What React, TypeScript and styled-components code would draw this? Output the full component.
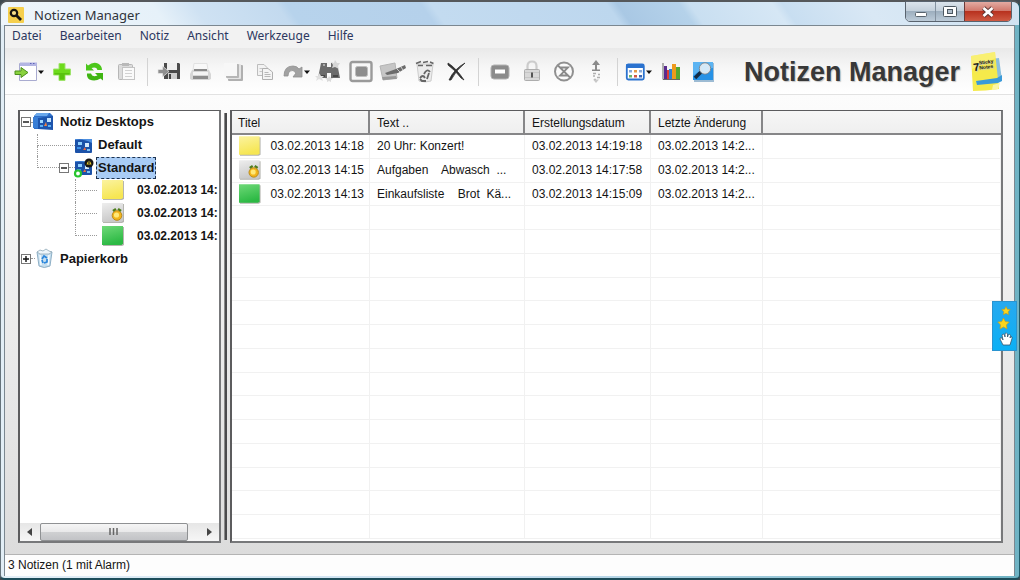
import React from "react";
import styled, { createGlobalStyle } from "styled-components";

const GlobalStyle = createGlobalStyle`
  * { box-sizing: border-box; }
  html, body { margin: 0; background: #3f4a50; }
  body { font-family: "Liberation Sans", Arial, sans-serif; font-size: 12px; color: #141414; }
  button { font: inherit; color: inherit; padding: 0; border: 0; background: none; }
  ul { list-style: none; margin: 0; padding: 0; }
`;

/* ---------- window frame ---------- */

const Window = styled.div`
  position: relative;
  display: flex;
  flex-direction: column;
  min-height: 100vh;
  padding: 0 4px 2px 3px;
  border-style: solid;
  border-width: 2px 1px 2px 1px;
  border-color: #55585b #1f5a68 #1d4d5a #66737b;
  border-radius: 8px 8px 5px 5px;
  background: linear-gradient(90deg, #e2eef6 0, #c9dff0 50%, #6fb3c4 100%);
`;

const TitleBar = styled.header`
  display: flex;
  align-items: center;
  height: 23px;
  margin: 0 -4px 0 -3px;
  padding: 3px 7px 0 7px;
  border-radius: 6px 6px 0 0;
  background: linear-gradient(
    55deg,
    #eff6fb 0, #e6f1f9 16%, #cfe2f3 20%, #c3daef 28%, #b7d3ec 29%, #b5d1eb 42%,
    #c3dbf0 43%, #bdd7ee 60%, #a9c8e4 61%, #b5d2ea 67%, #c9dff1 68%, #d6e7f5 76%,
    #c8def1 77%, #d9e8f5 85%, #cfe2f1 100%
  );
`;

const WindowTitle = styled.h1`
  flex: 1;
  margin: 0 0 0 10px;
  font: 400 13px/20px "Noto Sans", "Open Sans", sans-serif;
  color: #30343c;
`;

const Caption = styled.div`
  display: flex;
  align-self: flex-start;
  height: 21px;
  margin-top: -4px;
  border: 1px solid #59636e;
  border-radius: 0 0 5px 5px;
  overflow: hidden;
`;

const CaptionButton = styled.button<{ $close?: boolean }>`
  display: flex;
  align-items: center;
  justify-content: center;
  width: ${(p) => (p.$close ? 47 : 29)}px;
  border-left: ${(p) => (p.$close ? "1px solid #6b3a38" : "0")};
  background: ${(p) =>
    p.$close
      ? "linear-gradient(#e3aba2 0, #d0766a 48%, #b8321f 50%, #cf5a43 100%)"
      : "linear-gradient(#dbe4ec 0, #c3cfda 48%, #9dafbf 50%, #bccbd8 100%)"};
  & + &:not(:last-child) { border-left: 1px solid #8492a0; }
`;

const Client = styled.div`
  flex: 1;
  display: flex;
  flex-direction: column;
  border: 1px solid #7b8790;
  border-width: 1px 1px 0;
  background: #f1f1f1;
`;

/* ---------- menu and toolbar ---------- */

const MenuBar = styled.nav`
  display: flex;
  gap: 18px;
  height: 22px;
  padding: 0 7px;
  background: #f2f2f2;
`;

const MenuItem = styled.button`
  height: 20px;
  font: 400 12px/20px "Noto Sans", "Open Sans", sans-serif;
  color: #2c3760;
`;

const Toolbar = styled.div`
  display: flex;
  align-items: center;
  gap: 6px;
  height: 47px;
  padding: 1px 12px 0;
  border-bottom: 1px solid #e2e2e2;
  background: linear-gradient(#e9e9e9 0, #f7f7f7 45%, #ffffff 100%);
`;

const ToolButton = styled.button`
  display: flex;
  align-items: center;
  justify-content: center;
  flex: none;
  width: 26px;
  height: 26px;
  svg { flex: none; overflow: visible; }
`;

const Separator = styled.span`
  width: 1px;
  height: 28px;
  margin: 0 2px;
  background: #d3d3d3;
`;

const Brand = styled.div`
  display: flex;
  align-items: center;
  gap: 11px;
  margin-left: auto;
  font-size: 27px;
  line-height: 32px;
  font-weight: 700;
  color: #383838;
  white-space: nowrap;
  text-shadow: 1px 1px 1px #c4c4c4;
`;

/* ---------- body ---------- */

const Body = styled.main`
  flex: 1;
  display: flex;
  padding: 15px 11px 11px 13px;
  background: linear-gradient(#fcfcfc 0, #ececec 50%, #dcdcdc 100%);
`;

const Panel = styled.section`
  display: flex;
  flex-direction: column;
  border: 2px solid #77787a;
  border-top-color: #5c5c5e;
  border-left-color: #5c5c5e;
  background: #fff;
  overflow: hidden;
`;

const TreePanel = styled(Panel)`
  flex: none;
  width: 203px;
  border-top-width: 1px;
`;

const Splitter = styled.div`
  width: 3px;
  margin: 3px;
  border-left: 1px solid #8a8a8a;
  border-right: 2px solid #4a4a4c;
`;

const ListPanel = styled(Panel)`
  flex: 1;
  min-width: 0;
  border-top-width: 1px;
`;

const Tree = styled.ul`
  display: grid;
  grid-auto-rows: 1fr;
  height: 159px;
`;

const TreeRow = styled.li<{ $indent: number }>`
  display: flex;
  align-items: center;
  padding-left: ${(p) => p.$indent}px;
  white-space: nowrap;
`;

const Guide = styled.span<{ $width: number; $last?: boolean }>`
  display: flex;
  flex-direction: column;
  align-self: stretch;
  flex: none;
  width: ${(p) => p.$width}px;
  &::before {
    content: "";
    flex: 1;
    border-left: 1px dotted #9a9a9a;
    border-bottom: 1px dotted #9a9a9a;
  }
  &::after {
    content: "";
    flex: 1;
    border-left: 1px dotted ${(p) => (p.$last ? "transparent" : "#9a9a9a")};
  }
`;

const Dash = styled.span<{ $width: number }>`
  flex: none;
  width: ${(p) => p.$width}px;
  border-top: 1px dotted #9a9a9a;
`;

const Toggle = styled.button`
  flex: none;
  display: flex;
  width: 10px;
  height: 10px;
  svg { display: block; }
`;

const TreeIcon = styled.span<{ $width: number }>`
  flex: none;
  display: flex;
  justify-content: center;
  width: ${(p) => p.$width}px;
  svg { overflow: visible; }
`;

const TreeLabel = styled.span<{ $selected?: boolean }>`
  margin-left: 4px;
  padding: 0 1px;
  font-size: 13px;
  line-height: 20px;
  font-weight: 700;
  border: 1px dashed ${(p) => (p.$selected ? "#1d3350" : "transparent")};
  background: ${(p) => (p.$selected ? "#a9ccf5" : "none")};
`;

const NoteLabel = styled.span`
  margin-left: 8px;
  font-weight: 700;
  line-height: 20px;
`;

const ScrollBar = styled.div`
  display: flex;
  height: 18px;
  margin-top: auto;
  background: linear-gradient(#e6e6e6, #f6f6f6);
`;

const ScrollArrow = styled.button`
  display: flex;
  align-items: center;
  justify-content: center;
  flex: none;
  width: 20px;
`;

const ScrollTrack = styled.div`
  flex: 1;
  display: flex;
`;

const ScrollThumb = styled.div`
  display: flex;
  align-items: center;
  justify-content: center;
  width: 93%;
  border: 1px solid #8f9193;
  border-radius: 2px;
  background: linear-gradient(#f5f5f5 0, #e9e9ea 48%, #cfd0d2 52%, #c2c3c6 100%);
`;

/* ---------- list ---------- */

const NoteTable = styled.table`
  flex: 1;
  width: 100%;
  table-layout: fixed;
  border-collapse: separate;
  border-spacing: 0;
  margin-bottom: 2px;
`;

const TableFrame = styled.div`
  flex: 1;
  display: flex;
`;

const Col = styled.col<{ $width?: number }>`
  width: ${(p) => (p.$width ? `${p.$width}px` : "auto")};
`;

const Th = styled.th`
  height: 24px;
  padding: 1px 7px 0;
  text-align: left;
  font-weight: 400;
  line-height: 18px;
  white-space: nowrap;
  background: linear-gradient(#f6f6f6, #efefef);
  border-bottom: 2px solid #868688;
  border-right: 2px solid #868688;
  &:first-child { padding-left: 6px; }
  &:last-child { border-right: 0; }
`;

const Td = styled.td`
  height: 23px;
  padding: 0 5px 0 7px;
  line-height: 20px;
  white-space: pre;
  overflow: hidden;
  text-overflow: ellipsis;
  border-bottom: 1px solid #f1f1f1;
  border-right: 1px solid #f1f1f1;
`;

const TitleCell = styled.div`
  display: flex;
  align-items: center;
  gap: 10px;
`;

/* ---------- status and side tab ---------- */

const StatusBar = styled.footer`
  height: 22px;
  padding: 0 3px;
  line-height: 21px;
  border-top: 1px solid #b4b4b4;
  background: #fdfdfd;
`;

const SideTab = styled.button`
  position: absolute;
  right: 2px;
  bottom: 227px;
  width: 25px;
  height: 50px;
  border: 1px solid #2a94d0;
  background: linear-gradient(#27a9ef, #0bb0f5);
  svg { display: block; }
`;

/* ---------- drawings ---------- */

type NoteKind = "yellow" | "alarm" | "green";
const noteColors: Record<NoteKind, [string, string]> = {
  yellow: ["#fbf3a0", "#f6e652"],
  alarm: ["#eeeeee", "#c9c9c9"],
  green: ["#6fd978", "#2cb944"],
};

const NoteIcon = ({ kind, id }: { kind: NoteKind; id: string }) => (
  <svg width="22" height="20" viewBox="0 0 22 20" aria-hidden="true">
    <defs>
      <linearGradient id={id} x1="0" y1="0" x2="0.3" y2="1">
        <stop offset="0" stopColor={noteColors[kind][0]} />
        <stop offset="1" stopColor={noteColors[kind][1]} />
      </linearGradient>
    </defs>
    <path d="M1 1H22V19L20 20H1Z" fill="#9c9c94" opacity=".75" />
    <path d="M0 0H21V17.5L19.500 19H0Z" fill={`url(#${id})`} />
    {kind === "alarm" && (
      <g>
        <path d="M11 8l3-2M19 8l-3-2" stroke="#4f7d1d" strokeWidth="2.500" />
        <circle cx="15" cy="12.500" r="4.800" fill="#f3b51b" stroke="#b98a1c" />
        <circle cx="14.500" cy="12" r="2.600" fill="#ffe878" />
      </g>
    )}
  </svg>
);

const DesktopIcon = ({ badge }: { badge?: boolean }) => (
  <svg width="17" height="15" viewBox="0 0 17 15" aria-hidden="true">
    <rect x="0" y="1" width="17" height="14" rx="1" fill="#1c52a8" />
    <path d="M0 2Q8 0 17 5V1H0Z" fill="#4d8fe0" />
    <rect x="3" y="4" width="4" height="3" fill="#8fd0ff" />
    <rect x="2" y="9" width="4" height="2" fill="#3f93e8" />
    <rect x="10" y="5" width="4" height="4" fill="#d6ecff" />
    <path d="M8 12l2-3 1 3z" fill="#f26d3c" />
    <rect x="12" y="11" width="3" height="2" fill="#7ec2f5" />
    {badge && (
      <g>
        <circle cx="14" cy="3" r="4.500" fill="#151515" />
        <path d="M11.500 4.500Q14-3 16.500 4.500Z" fill="#e4c62b" />
        <path d="M14 1v3" stroke="#222" strokeWidth="1.200" />
        <circle cx="3" cy="13.500" r="3" fill="#fff" stroke="#27c52f" strokeWidth="2.200" />
      </g>
    )}
  </svg>
);

const DesktopsIcon = () => (
  <svg width="21" height="18" viewBox="0 0 21 18" aria-hidden="true">
    <path d="M1 3L4 0H17L20 3V15L17 16H1Z" fill="#2f6fc8" />
    <path d="M1 3L4 0H16L14 3Z" fill="#6aa8ec" />
    <rect x="0" y="4" width="9" height="11" fill="#3a7fd6" />
    <path d="M5 5L20 3V17L5 16Z" fill="#1d55ad" />
    <rect x="7" y="7" width="3" height="3" fill="#9ed6ff" />
    <rect x="14" y="5" width="4" height="4" fill="#c4e3ff" />
    <path d="M11 13l2-4 1 4z" fill="#f08040" />
    <rect x="7" y="12" width="3" height="2" fill="#5db0f4" />
    <rect x="15" y="12" width="3" height="2" fill="#5db0f4" />
  </svg>
);

const BinIcon = () => (
  <svg width="17" height="19" viewBox="0 0 17 19" aria-hidden="true">
    <path d="M1 3H16L14 17Q8 20 3 17Z" fill="#c6deee" stroke="#8fb0c6" />
    <path d="M1 3L4 1L7 2L10 0L13 2L16 3L13 5H4Z" fill="#eef6fb" stroke="#90a9b8" strokeWidth=".8" />
    <path d="M4 6l1 10M13 6l-1 10" stroke="#f4fafd" strokeWidth="1.500" />
    <path d="M6 10l2-3 3 2M11 10v3l-3 1M6 11l1 3" stroke="#2b86dc" strokeWidth="1.700" fill="none" />
  </svg>
);

const ToggleIcon = ({ open }: { open?: boolean }) => (
  <svg width="10" height="10" viewBox="0 0 10 10" aria-hidden="true">
    <rect x=".5" y=".5" width="9" height="9" fill="#fff" stroke="#777" />
    <path d={open ? "M2 5H8" : "M2 5H8M5 2V8"} stroke="#111" strokeWidth="1.400" />
  </svg>
);

const Caret = ({ x }: { x: number }) => <path d={`M${x} 10.500h6l-3 3.500z`} fill="#111" />;

const toolIcons = {
  open: (
    <svg width="30" height="24" viewBox="0 0 30 24">
      <path d="M4.500 3.500H21.500V20.500H4.500Z" fill="#fff" stroke="#a9abd0" />
      <path d="M5 2.500H22V6H5Z" fill="#b3b5e3" />
      <path d="M15 3.500h1.500M18 3.500h1.500" stroke="#5d62b8" />
      <path d="M0 11H6V7.500L13 12.500L6 17.500V14.500H0Z" fill="#8ad23e" stroke="#4b8f1c" />
      <Caret x={23} />
    </svg>
  ),
  add: (
    <svg width="24" height="24" viewBox="0 0 24 24">
      <path d="M9 3.500H15V9H20.500V15H15V20.500H9V15H3.500V9H9Z" fill="#6ddb1c" stroke="#9ee36b" />
      <path d="M9.500 14.500H4.500V13H19.500V14.500H14.500V19.500H9.500Z" fill="#58c20e" />
    </svg>
  ),
  refresh: (
    <svg width="24" height="24" viewBox="0 0 24 24">
      <path d="M4 3.500L6 5.500Q11 1.500 16 3.500Q20 5.500 20 10H15.500Q14.500 6.500 9.500 8L12 10.500H4Z" fill="#4cc71b" />
      <path d="M21 20.500L18.500 18.500Q13 22 7.500 19.500Q4.500 17.500 5 13.500H9Q10 17.500 15.500 15.500L13 13H21Z" fill="#3fb512" />
    </svg>
  ),
  paste: (
    <svg width="24" height="24" viewBox="0 0 24 24">
      <rect x="4.500" y="4.500" width="14" height="15" rx="1" fill="#dcdcdc" stroke="#b6b6b6" />
      <rect x="8" y="3" width="7" height="3" fill="#b9b9b9" />
      <rect x="8.500" y="7.500" width="12" height="12" fill="#fafafa" stroke="#c4c4c4" />
      <path d="M11 10.500h7M11 13.500h7M11 16.500h7" stroke="#d2d2d2" />
    </svg>
  ),
  save: (
    <svg width="24" height="24" viewBox="0 0 24 24">
      <path d="M7 3H22L23 4V19H7Z" fill="#4b4b4b" />
      <rect x="10" y="3" width="10" height="7" fill="#efefef" />
      <rect x="11" y="13" width="9" height="6" fill="#cfcfcf" />
      <rect x="12" y="14" width="2" height="5" fill="#444" />
      <path d="M1 9.500H5.500V6L12 11.500L5.500 17V13.500H1Z" fill="#8f8f8f" stroke="#e8e8e8" strokeWidth=".7" />
    </svg>
  ),
  print: (
    <svg width="24" height="24" viewBox="0 0 24 24">
      <path d="M5 3.500H18L19 10H4Z" fill="#f8f8f8" stroke="#e2e2e2" />
      <path d="M3 10H20L22 14V19L20 20H3L1 19V14Z" fill="#d6d6d6" />
      <rect x="5" y="9" width="13" height="2" fill="#8a8a8a" />
      <rect x="4" y="12" width="15" height="3" fill="#f4f4f4" />
      <rect x="4" y="16" width="15" height="3" fill="#8d8d8d" />
    </svg>
  ),
  stack: (
    <svg width="24" height="24" viewBox="0 0 24 24">
      <rect x="7" y="5" width="15" height="16" rx="1" fill="#b0b0b0" />
      <rect x="6" y="4" width="14" height="15" rx="1" fill="#e4e4e4" />
      <rect x="5" y="4" width="13" height="14" rx="1" fill="#b6b6b6" />
      <rect x="3" y="3" width="13" height="13" fill="#f7f7f7" />
    </svg>
  ),
  copy: (
    <svg width="24" height="24" viewBox="0 0 24 24">
      <path d="M4.500 4.500H11L14.500 8V15.500H4.500Z" fill="#f2f2f2" stroke="#bdbdbd" />
      <path d="M6.500 8.500h4M6.500 11.500h3" stroke="#c8c8c8" />
      <path d="M9.500 8.500H15L19.500 12V19.500H9.500Z" fill="#f4f4f4" stroke="#b0b0b0" />
      <path d="M11.500 12.500h4M11.500 14.500h6M11.500 16.500h6" stroke="#b8b8b8" />
    </svg>
  ),
  redo: (
    <svg width="28" height="24" viewBox="0 0 28 24">
      <path d="M1 16Q1 6 10 6Q14 6 16 9L19 7V17H10L13 13Q10 9 7 11Q5 12.500 5 16Z" fill="#a2a2a2" stroke="#909090" strokeWidth=".8" />
      <Caret x={21} />
    </svg>
  ),
  find: (
    <svg width="26" height="24" viewBox="0 0 26 24">
      <path d="M5 3H11V7H15V3H21L24 18H15V13H11V18H2Z" fill="#6b6b6b" />
      <path d="M7 5H9M17 5H19" stroke="#aaa" strokeWidth="2" />
      <path d="M4 16H9M17 16H22" stroke="#474747" strokeWidth="2" />
      <path d="M19 0L21 3L24 3L22 6L23 9L19 7L16 8L17 5L15 2L18 3Z" fill="#d6d6d6" />
      <path d="M3 13L5 16L8 16L6 18L7 21L3 19L0 21L1 18L-1 16L2 16Z" fill="#e0e0e0" />
      <path d="M13 16L15 18L17 18L15 20L15 22L13 21L11 22V20L9 18H12Z" fill="#dadada" />
    </svg>
  ),
  frame: (
    <svg width="24" height="24" viewBox="0 0 24 24">
      <rect x="1.500" y="2" width="21" height="19" rx="2" fill="#f7f7f7" stroke="#9a9a9a" strokeWidth="2.400" />
      <rect x="6.500" y="6.500" width="12" height="10" rx="2" fill="#8d8d8d" stroke="#bdbdbd" />
    </svg>
  ),
  edit: (
    <svg width="28" height="24" viewBox="0 0 28 24">
      <path d="M1 6L16 3L18 18L4 20Z" fill="#c6c6c6" stroke="#b4b4b4" />
      <path d="M3 17L17 16L18 19L4 20Z" fill="#999" />
      <path d="M6 13L17 9L26 5L27 8L19 13L8 15Z" fill="#6c6c6c" />
      <path d="M18 9L21 12M22 7L24 10" stroke="#d0d0d0" />
    </svg>
  ),
  bin: (
    <svg width="24" height="24" viewBox="0 0 24 24">
      <path d="M4 4H20L18 21Q12 23 6 21Z" fill="#ececec" stroke="#cccccc" />
      <path d="M3 3.500L8 1.500M10 2.500L15 1.500M17 2L20.500 3.500M5 5.500H10M13 5.500H19" stroke="#666" strokeWidth="1.500" />
      <path d="M11 14Q14 8 17 12M16 13L14 19M7 18Q10 14 12 18M7 19L9 21H13" stroke="#666" strokeWidth="1.800" fill="none" />
    </svg>
  ),
  remove: (
    <svg width="24" height="24" viewBox="0 0 24 24">
      <path d="M3 3Q11 8 19 20L16 18Q10 10 3 5Z" fill="#303030" stroke="#303030" strokeWidth=".8" />
      <path d="M20 3Q11 10 6 20L4 20Q9 9 20 3Z" fill="#303030" stroke="#303030" strokeWidth=".8" />
    </svg>
  ),
  pill: (
    <svg width="24" height="24" viewBox="0 0 24 24">
      <rect x="3" y="5" width="18" height="14" rx="3" fill="#8b8b8b" stroke="#b3b3b3" />
      <rect x="7" y="9.500" width="10" height="4" fill="#fff" />
    </svg>
  ),
  lock: (
    <svg width="24" height="24" viewBox="0 0 24 24">
      <path d="M7.500 10V6Q7.500 1.500 12 1.500T16.500 6V10" fill="none" stroke="#cccccc" strokeWidth="2.200" />
      <rect x="4.500" y="9.500" width="15" height="11" rx="1" fill="#d8d8d8" stroke="#adadad" />
      <path d="M5 12.500H19M5 17.500H19" stroke="#c6c6c6" />
      <path d="M12 12.500V17.500" stroke="#555" strokeWidth="2" />
    </svg>
  ),
  sleep: (
    <svg width="24" height="24" viewBox="0 0 24 24">
      <circle cx="12" cy="11.500" r="9" fill="#fafafa" stroke="#909090" strokeWidth="2" />
      <path d="M8 7.500H16L8 15.500H16M6 5.500L18 17.500" fill="none" stroke="#8a8a8a" strokeWidth="1.800" />
    </svg>
  ),
  order: (
    <svg width="24" height="24" viewBox="0 0 24 24">
      <path d="M12 0L16 5H13V9.500H16V11H8V9.500H11V5H8Z" fill="#8a8a8a" />
      <path d="M9 13.500H12M14 14.500H16M9 16H11M13 17.500H16M10 19.500H12" stroke="#b0b0b0" strokeWidth="1.600" />
      <path d="M9 19.500H15L12 23Z" fill="#c8c8c8" />
    </svg>
  ),
  view: (
    <svg width="26" height="24" viewBox="0 0 26 24">
      <rect x=".8" y="4.500" width="17" height="15" rx="1.500" fill="#fff" stroke="#2a72cf" strokeWidth="1.800" />
      <rect x="0" y="4" width="18" height="4" rx="1" fill="#2a72cf" />
      <g>
        <rect x="3" y="10" width="3" height="2.500" fill="#8aa9d8" />
        <rect x="8" y="10" width="3" height="2.500" fill="#e39a45" />
        <rect x="13" y="10" width="3" height="2.500" fill="#8aa9d8" />
        <rect x="3" y="15" width="3" height="2.500" fill="#6db569" />
        <rect x="8" y="15" width="3" height="2.500" fill="#d05646" />
        <rect x="13" y="15" width="3" height="2.500" fill="#3e67b4" />
      </g>
      <Caret x={20} />
    </svg>
  ),
  chart: (
    <svg width="24" height="24" viewBox="0 0 24 24">
      <path d="M4 3V19.500H21" fill="none" stroke="#666" />
      <rect x="5" y="6" width="3" height="13" fill="#5a2b8e" />
      <rect x="8" y="10" width="3" height="9" fill="#de3d30" />
      <rect x="10" y="9" width="3" height="10" fill="#2f80d2" />
      <rect x="13" y="4" width="4" height="15" fill="#ee9a1d" />
      <rect x="17" y="7" width="4" height="12" fill="#55a832" />
    </svg>
  ),
  search: (
    <svg width="24" height="24" viewBox="0 0 24 24">
      <rect x="3" y="3" width="20" height="19" fill="#9dbbd3" />
      <rect x="2" y="2" width="20" height="18" fill="#2792e6" />
      <path d="M2 2H22V8Q11 8 2 16Z" fill="#5cb4f2" />
      <path d="M10 12L4 18" stroke="#152c45" strokeWidth="3.500" />
      <circle cx="14" cy="8.500" r="5" fill="#d3e9f8" stroke="#dfe4e8" strokeWidth="1.500" />
      <circle cx="14" cy="8.500" r="5.700" fill="none" stroke="#6c7b88" strokeWidth=".8" />
    </svg>
  ),
};

type ToolId = keyof typeof toolIcons;
const tools: ([ToolId, string] | null)[] = [
  ["open", "Öffnen"], ["add", "Neue Notiz"], ["refresh", "Aktualisieren"], ["paste", "Einfügen"], null,
  ["save", "Speichern"], ["print", "Drucken"], ["stack", "Duplizieren"], ["copy", "Kopieren"],
  ["redo", "Verschieben"], ["find", "Suchen"], ["frame", "Anzeigen"], ["edit", "Bearbeiten"],
  ["bin", "In den Papierkorb"], ["remove", "Löschen"], null,
  ["pill", "Minimieren"], ["lock", "Sperren"], ["sleep", "Schlafen"], ["order", "Sortieren"], null,
  ["view", "Ansicht"], ["chart", "Statistik"], ["search", "Suche"],
];

const AppIcon = () => (
  <svg width="16" height="16" viewBox="0 0 16 16" aria-hidden="true">
    <rect width="16" height="16" rx="1" fill="#f5cf4e" />
    <circle cx="6" cy="6" r="3.200" fill="#f8e08a" stroke="#171512" strokeWidth="2.200" />
    <path d="M8.500 8.500L13 13" stroke="#171512" strokeWidth="2.800" />
  </svg>
);

const BrandIcon = () => (
  <svg width="31" height="40" viewBox="0 0 31 40" aria-hidden="true">
    <path d="M11 8L28 6L31 28L14 34Z" fill="#8dbfdc" />
    <path d="M0 4L24 0L28 37Q14 39 2 39Z" fill="#f5ea4b" />
    <path d="M0 4L24 0L25 6L1 17Z" fill="#fbf48c" opacity=".6" />
    <path d="M5 29L26 26L31 23L31 29L27 31L6 33Z" fill="#3a9ad9" />
    <path d="M22 33L29 31L27 37L21 38Z" fill="#fbf6a6" />
    <g transform="rotate(-7 12 13)" fontFamily="Liberation Sans, sans-serif" fontWeight="700" fill="#15150f">
      <text x="2" y="18" fontSize="11">7</text>
      <text x="8" y="12" fontSize="5">Sticky</text>
      <text x="8" y="17" fontSize="5">Notes</text>
    </g>
  </svg>
);

const star = (cx: number, cy: number, r: number) =>
  Array.from({ length: 10 }, (_, i) => {
    const radius = i % 2 ? r * 0.5 : r;
    const a = (Math.PI / 5) * i - Math.PI / 2;
    return `${(cx + radius * Math.cos(a)).toFixed(1)},${(cy + radius * Math.sin(a)).toFixed(1)}`;
  }).join(" ");

const menus = ["Datei", "Bearbeiten", "Notiz", "Ansicht", "Werkzeuge", "Hilfe"];

const notes: { kind: NoteKind; title: string; text: string; created: string; changed: string }[] = [
  { kind: "yellow", title: "03.02.2013 14:18", text: "20 Uhr: Konzert!", created: "03.02.2013 14:19:18", changed: "03.02.2013 14:2..." },
  { kind: "alarm", title: "03.02.2013 14:15", text: "Aufgaben    Abwasch  ...", created: "03.02.2013 14:17:58", changed: "03.02.2013 14:2..." },
  { kind: "green", title: "03.02.2013 14:13", text: "Einkaufsliste    Brot  Kä...", created: "03.02.2013 14:15:09", changed: "03.02.2013 14:2..." },
];

const emptyRows = Array.from({ length: 14 }, (_, i) => i);

export default function App() {
  return (
    <>
      <GlobalStyle />
      <Window>
        <TitleBar>
          <AppIcon />
          <WindowTitle>Notizen Manager</WindowTitle>
          <Caption>
            <CaptionButton aria-label="Minimieren">
              <svg width="14" height="14" viewBox="0 0 14 14">
                <rect x="1.500" y="7.500" width="11" height="4" rx="1" fill="#fff" stroke="#58636d" />
              </svg>
            </CaptionButton>
            <CaptionButton aria-label="Maximieren">
              <svg width="14" height="14" viewBox="0 0 14 14">
                <rect x=".5" y="1.500" width="13" height="10" rx="1" fill="#fff" stroke="#4d5861" />
                <rect x="4.500" y="4.500" width="5" height="4" fill="#aebcc9" stroke="#4d5861" />
              </svg>
            </CaptionButton>
            <CaptionButton $close aria-label="Schließen">
              <svg width="14" height="12" viewBox="0 0 14 12">
                <path d="M2.500 2L11.500 10M11.500 2L2.500 10" stroke="#5f3734" strokeWidth="4.600" />
                <path d="M2.500 2L11.500 10M11.500 2L2.500 10" stroke="#fff" strokeWidth="2.800" />
              </svg>
            </CaptionButton>
          </Caption>
        </TitleBar>

        <Client>
          <MenuBar>
            {menus.map((m) => (
              <MenuItem key={m}>{m}</MenuItem>
            ))}
          </MenuBar>

          <Toolbar>
            {tools.map((t, i) =>
              t ? (
                <ToolButton key={i} aria-label={t[1]}>{toolIcons[t[0]]}</ToolButton>
              ) : (
                <Separator key={i} />
              )
            )}
            <Brand>
              Notizen Manager
              <BrandIcon />
            </Brand>
          </Toolbar>

          <Body>
            <TreePanel>
              <Tree>
                <TreeRow $indent={1}>
                  <Toggle aria-label="Notiz Desktops einklappen"><ToggleIcon open /></Toggle>
                  <Dash $width={2} />
                  <TreeIcon $width={21}><DesktopsIcon /></TreeIcon>
                  <TreeLabel>Notiz Desktops</TreeLabel>
                </TreeRow>
                <TreeRow $indent={17}>
                  <Guide $width={38} />
                  <TreeIcon $width={17}><DesktopIcon /></TreeIcon>
                  <TreeLabel>Default</TreeLabel>
                </TreeRow>
                <TreeRow $indent={17}>
                  <Guide $width={22} $last />
                  <Toggle aria-label="Standard einklappen"><ToggleIcon open /></Toggle>
                  <Dash $width={6} />
                  <TreeIcon $width={17}><DesktopIcon badge /></TreeIcon>
                  <TreeLabel $selected>Standard</TreeLabel>
                </TreeRow>
                {notes.map((n, i) => (
                  <TreeRow key={n.kind} $indent={55}>
                    <Guide $width={22} $last={i === notes.length - 1} />
                    <TreeIcon $width={32}><NoteIcon kind={n.kind} id={`tree-${n.kind}`} /></TreeIcon>
                    <NoteLabel>{n.title.slice(0, 14)}</NoteLabel>
                  </TreeRow>
                ))}
                <TreeRow $indent={1}>
                  <Toggle aria-label="Papierkorb ausklappen"><ToggleIcon /></Toggle>
                  <Dash $width={4} />
                  <TreeIcon $width={19}><BinIcon /></TreeIcon>
                  <TreeLabel>Papierkorb</TreeLabel>
                </TreeRow>
              </Tree>
              <ScrollBar>
                <ScrollArrow aria-label="Nach links">
                  <svg width="8" height="8" viewBox="0 0 8 8"><path d="M6 0V8L1 4Z" fill="#444" /></svg>
                </ScrollArrow>
                <ScrollTrack>
                  <ScrollThumb>
                    <svg width="10" height="8" viewBox="0 0 10 8">
                      <path d="M1 0V7M4.500 0V7M8 0V7" stroke="#666" strokeWidth="1.500" />
                    </svg>
                  </ScrollThumb>
                </ScrollTrack>
                <ScrollArrow aria-label="Nach rechts">
                  <svg width="8" height="8" viewBox="0 0 8 8"><path d="M2 0V8L7 4Z" fill="#444" /></svg>
                </ScrollArrow>
              </ScrollBar>
            </TreePanel>

            <Splitter />

            <ListPanel>
              <TableFrame>
                <NoteTable>
                  <colgroup>
                    <Col $width={138} />
                    <Col $width={155} />
                    <Col $width={126} />
                    <Col $width={112} />
                    <Col />
                  </colgroup>
                  <thead>
                    <tr>
                      <Th>Titel</Th>
                      <Th>Text ..</Th>
                      <Th>Erstellungsdatum</Th>
                      <Th>Letzte Änderung</Th>
                      <Th aria-label="Leer" />
                    </tr>
                  </thead>
                  <tbody>
                    {notes.map((n) => (
                      <tr key={n.kind}>
                        <Td>
                          <TitleCell>
                            <NoteIcon kind={n.kind} id={`list-${n.kind}`} />
                            {n.title}
                          </TitleCell>
                        </Td>
                        <Td>{n.text}</Td>
                        <Td>{n.created}</Td>
                        <Td>{n.changed}</Td>
                        <Td />
                      </tr>
                    ))}
                    {emptyRows.map((r) => (
                      <tr key={r}>
                        <Td /><Td /><Td /><Td /><Td />
                      </tr>
                    ))}
                  </tbody>
                </NoteTable>
              </TableFrame>
            </ListPanel>
          </Body>

          <StatusBar>3 Notizen (1 mit Alarm)</StatusBar>
        </Client>

        <SideTab aria-label="Favoriten">
          <svg width="23" height="48" viewBox="0 0 23 48">
            <polygon points={star(13, 9, 4.5)} fill="#fbd51c" stroke="#c99a12" strokeWidth=".6" />
            <polygon points={star(10.5, 22, 6)} fill="#fbd51c" stroke="#c99a12" strokeWidth=".6" />
            <path
              d="M10 43L7 37Q7 35 9 36L10 38L9 33Q10 31 11.500 33L12 35L12 31.500Q13.500 30 14.500 32L14.500 35L15.500 32.500Q17 31.500 17.500 33.500L17 36L18 34.500Q19.500 34.500 19 36.500L17 43Z"
              fill="#fff" stroke="#33566e" strokeWidth=".8"
            />
          </svg>
        </SideTab>
      </Window>
    </>
  );
}
